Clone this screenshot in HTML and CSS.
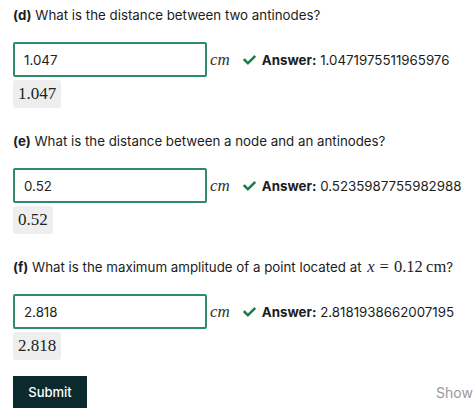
FILE: index.html
```html
<!DOCTYPE html>
<html>
<head>
<meta charset="utf-8">
<link rel="stylesheet" href="styles.css">
</head>
<body>
<div class="page">
  <section class="part part-first">
    <p class="question"><b>(d)</b> What is the distance between two antinodes?</p>
    <div class="row">
      <div class="input">1.047</div>
      <span class="unit">cm</span>
      <svg class="check" viewBox="0 0 512 400" width="13" height="10"><path d="M173.9 383.4l-166.4-166.4c-10-10-10-26.2 0-36.2l36.2-36.2c10-10 26.2-10 36.2 0L192 256.7 432.1 16.6c10-10 26.2-10 36.2 0l36.2 36.2c10 10 10 26.2 0 36.2l-294.4 294.4c-10 10-26.2 10-36.2 0z" fill="#1c7a4e"/></svg>
      <span class="answer"><b>Answer:</b> 1.0471975511965976</span>
    </div>
    <div class="preview">1.047</div>
  </section>
  <section class="part">
    <p class="question"><b>(e)</b> What is the distance between a node and an antinodes?</p>
    <div class="row">
      <div class="input">0.52</div>
      <span class="unit">cm</span>
      <svg class="check" viewBox="0 0 512 400" width="13" height="10"><path d="M173.9 383.4l-166.4-166.4c-10-10-10-26.2 0-36.2l36.2-36.2c10-10 26.2-10 36.2 0L192 256.7 432.1 16.6c10-10 26.2-10 36.2 0l36.2 36.2c10 10 10 26.2 0 36.2l-294.4 294.4c-10 10-26.2 10-36.2 0z" fill="#1c7a4e"/></svg>
      <span class="answer"><b>Answer:</b> 0.5235987755982988</span>
    </div>
    <div class="preview">0.52</div>
  </section>
  <section class="part">
    <p class="question"><b>(f)</b> What is the maximum amplitude of a point located at <span class="math"><i>x</i><span class="rel">=</span>0.12&#8201;cm</span>?</p>
    <div class="row">
      <div class="input">2.818</div>
      <span class="unit">cm</span>
      <svg class="check" viewBox="0 0 512 400" width="13" height="10"><path d="M173.9 383.4l-166.4-166.4c-10-10-10-26.2 0-36.2l36.2-36.2c10-10 26.2-10 36.2 0L192 256.7 432.1 16.6c10-10 26.2-10 36.2 0l36.2 36.2c10 10 10 26.2 0 36.2l-294.4 294.4c-10 10-26.2 10-36.2 0z" fill="#1c7a4e"/></svg>
      <span class="answer"><b>Answer:</b> 2.8181938662007195</span>
    </div>
    <div class="preview">2.818</div>
  </section>
  <div class="actions">
    <button class="submit">Submit</button>
    <span class="show">Show answer</span>
  </div>
</div>
</body>
</html>
```

FILE: styles.css
```css
html, body {
  margin: 0;
  padding: 0;
  background: #ffffff;
  overflow: hidden;
}
body {
  font-family: Inter, "Noto Sans", sans-serif;
  color: #1c1c1c;
  font-size: 13.3px;
}
.page {
  padding: 5px 0 0 13px;
  width: 520px;
}
.part {
  margin-top: 23px;
}
.part-first {
  margin-top: 0;
}
.question {
  margin: 0;
  line-height: 20px;
  height: 20px;
  font-size: 13.3px;
  white-space: nowrap;
}
.question b {
  font-weight: 700;
}
.math {
  font-family: "Liberation Serif", "DejaVu Serif", serif;
  font-size: 16.5px;
  margin-left: 2px;
}
.math .rel {
  margin: 0 5px;
}
.row {
  display: flex;
  align-items: center;
  margin-top: 17px;
  height: 35px;
}
.input {
  box-sizing: border-box;
  width: 194px;
  height: 35px;
  border: 2px solid #2f8a68;
  border-radius: 2px;
  padding: 0 9px;
  display: flex;
  align-items: center;
  font-size: 13.3px;
  color: #222;
}
.unit {
  font-family: "Liberation Serif", "DejaVu Serif", serif;
  font-style: italic;
  font-size: 17px;
  margin-left: 3px;
  color: #333;
}
.check {
  margin-left: 13px;
}
.answer {
  margin-left: 6px;
  font-size: 13.3px;
  white-space: nowrap;
}
.answer b {
  font-weight: 700;
}
.preview {
  display: inline-block;
  margin-top: 3px;
  background: #eeeeee;
  border-radius: 3px;
  padding: 0 5px;
  height: 28px;
  line-height: 28px;
  font-family: "Liberation Serif", "DejaVu Serif", serif;
  font-size: 17px;
  color: #222;
}
.actions {
  display: flex;
  align-items: center;
  gap: 349px;
  margin-top: 16px;
}
.submit {
  width: 74px;
  height: 32px;
  background: #0b2a2e;
  color: #fff;
  border: none;
  border-radius: 0;
  font-family: Inter, sans-serif;
  font-size: 13px;
  font-weight: 500;
  flex: none;
}
.show {
  color: #9a9a9a;
  font-size: 14px;
  white-space: nowrap;
}
```
